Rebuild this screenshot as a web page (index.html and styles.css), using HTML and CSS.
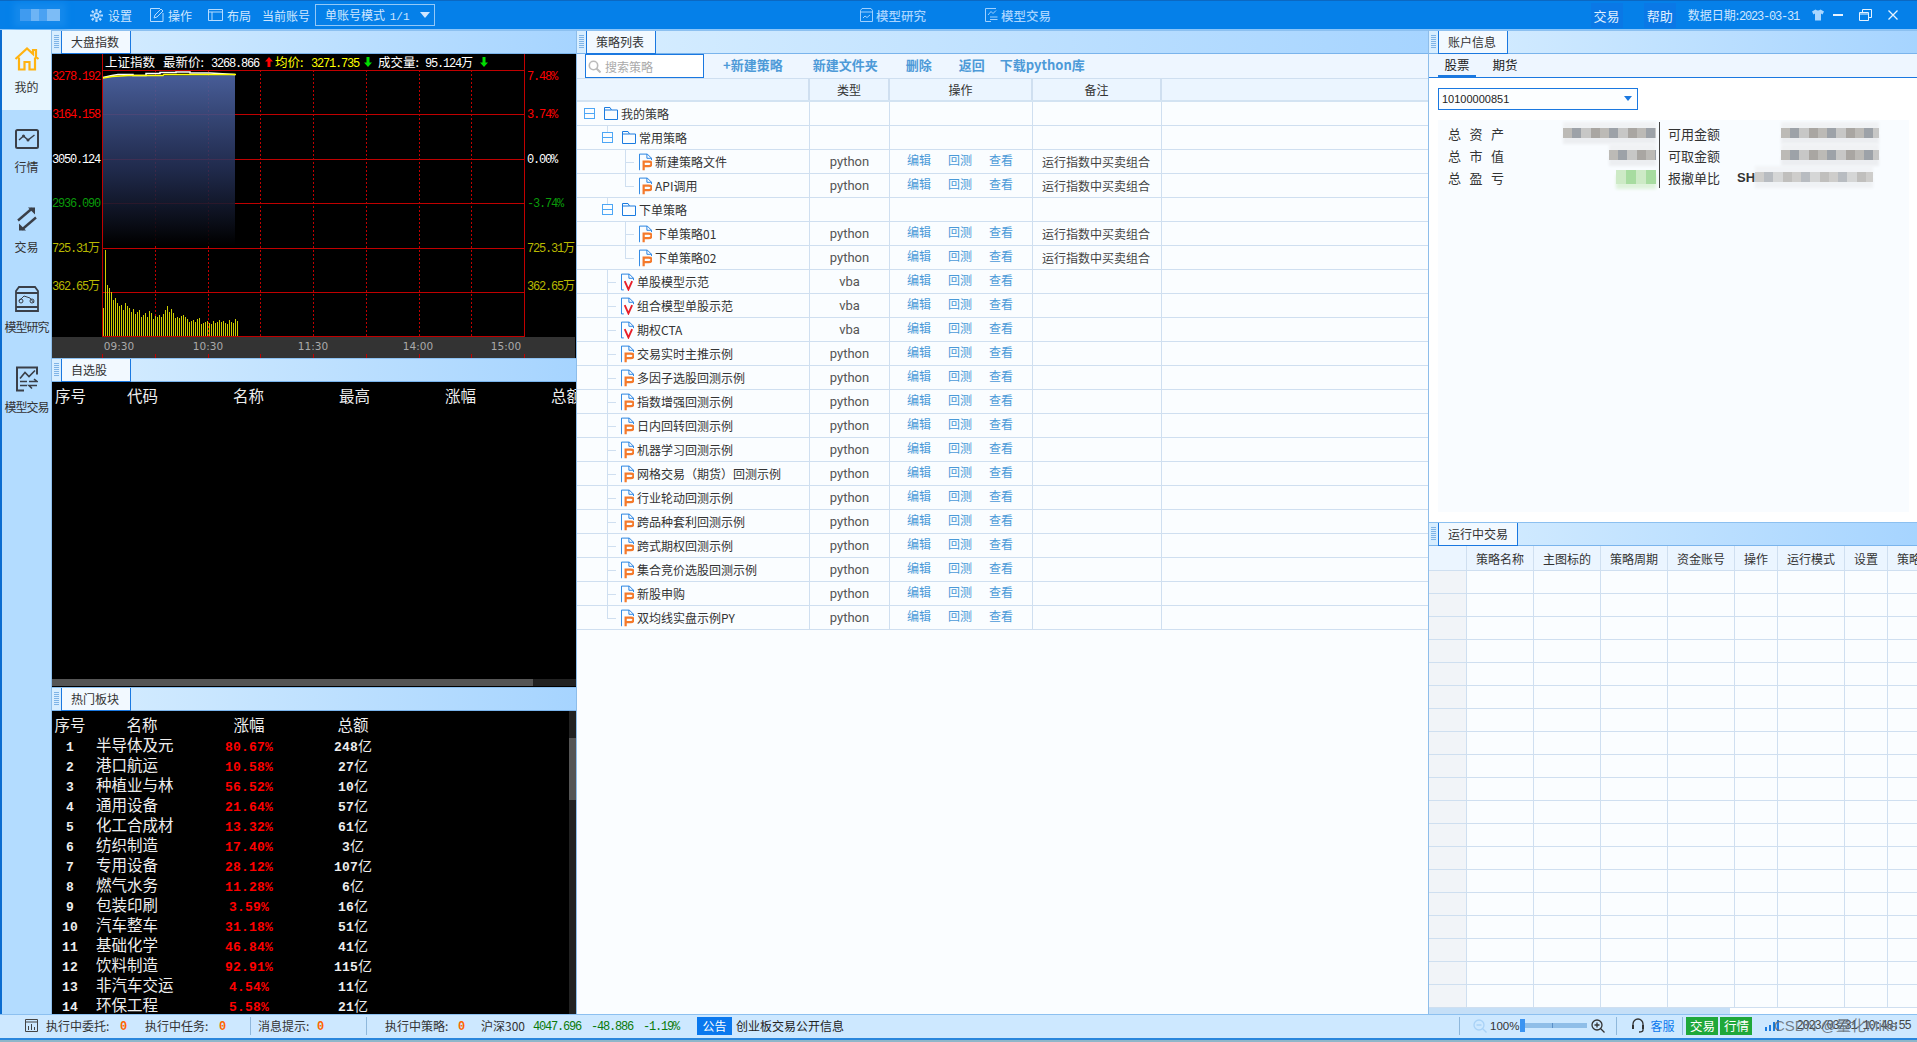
FILE: index.html
```html
<!DOCTYPE html>
<html lang="zh-CN">
<head>
  <meta charset="UTF-8" />
  <title>量化交易终端</title>
  <link rel="stylesheet" href="styles.css">
</head>
<body>
  <svg class="sprite" width="0" height="0">
    <symbol id="ic-p" viewBox="0 0 14 18">
      <path d="M1 17.5H.5V.5H9L13.5 5V7" fill="none" stroke="#1a7be0"/>
      <path d="M8.5 .5V5H13.5" fill="none" stroke="#1a7be0"/>
      <path d="M5 18V8.5H10.5Q13.5 8.5 13.5 11T10.5 13.5H5" fill="none" stroke="#f4792b" stroke-width="2.4"/>
    </symbol>
    <symbol id="ic-v" viewBox="0 0 14 18">
      <path d="M3 17.5H.5V.5H9L13.5 5V7" fill="none" stroke="#1a7be0"/>
      <path d="M8.5 .5V5H13.5" fill="none" stroke="#1a7be0"/>
      <path d="M4 8L8 17L12 8" fill="none" stroke="#e8202a" stroke-width="2"/>
    </symbol>
    <symbol id="ic-folder" viewBox="0 0 14 13">
      <path d="M.5 12.5V.5H6L7.5 3H13.5V12.5ZM.5 3H7.5" fill="none" stroke="#1a7be0"/>
    </symbol>
    <symbol id="ic-box" viewBox="0 0 11 11">
      <rect x=".5" y=".5" width="10" height="10" fill="#fafdff" stroke="#4da6f5"/>
      <path d="M1 5.5H10" stroke="#4da6f5"/>
    </symbol>
    <symbol id="ic-arrow-up" viewBox="0 0 8 10"><path d="M4 0L8 4.5H5.5V10H2.5V4.5H0Z"/></symbol>
    <symbol id="ic-arrow-down" viewBox="0 0 8 10"><path d="M4 10L8 5.5H5.5V0H2.5V5.5H0Z"/></symbol>
  </svg>

  <div class="topbar">
    <div class="logo-blur"></div>
    <div class="menu-item menu-first">
      <svg width="13" height="13" viewBox="0 0 14 14"><path d="M7 4.5A2.5 2.5 0 1 0 7 9.5A2.5 2.5 0 1 0 7 4.5Z" fill="none" stroke="#b6dcff" stroke-width="2"/><path d="M7 0V3M7 11V14M0 7H3M11 7H14M2 2L4 4M10 10L12 12M12 2L10 4M4 10L2 12" stroke="#b6dcff" stroke-width="2.4"/></svg>
      设置
    </div>
    <div class="menu-item menu-edit">
      <svg width="14" height="14" viewBox="0 0 14 14"><path d="M10 .5H.5V13.5H13V5M4 10L5 7L11 1L13 3L7 9Z" fill="none" stroke="#b6dcff"/></svg>
      操作
    </div>
    <div class="menu-item menu-layout">
      <svg width="15" height="12" viewBox="0 0 15 12"><path d="M.5 .5H14.5V11.5H.5ZM.5 3H14.5M4 3V11.5" fill="none" stroke="#b6dcff"/></svg>
      布局
    </div>
    <div class="menu-label">当前账号</div>
    <div class="mode-select">单账号模式 <span class="mode-num">1/1</span><i class="mode-caret"></i></div>
    <div class="top-center">
      <div class="center-btn">
        <svg width="13" height="14" viewBox="0 0 13 14"><path d="M.5 13.5V2.5L2 .5H11L12.5 2.5V13.5ZM.5 4H12.5M3 10L5 8L7 9.5L10 7" fill="none" stroke="#9fd0ff"/></svg>
        模型研究
      </div>
      <div class="center-btn">
        <svg width="13" height="14" viewBox="0 0 13 14"><path d="M11 .5H.5V13.5H6M3 7L6 3.5L8 5.5L11 2.5M5 9H12.5M5 11.5H12.5" fill="none" stroke="#9fd0ff"/></svg>
        模型交易
      </div>
    </div>
    <div class="top-right">
      <div class="top-link">交易</div>
      <div class="top-link">帮助</div>
      <div class="data-date">数据日期:<span class="mono-text">2023-03-31</span></div>
      <svg class="win-shirt" width="12" height="12" viewBox="0 0 12 12"><path d="M3.5 .5L0 2.5L1.5 5.5L3 4.5V11.5H9V4.5L10.5 5.5L12 2.5L8.5 .5Q6 2.5 3.5 .5Z" fill="#a9d6ff"/></svg>
      <svg class="win-btn" width="10" height="10" viewBox="0 0 10 10"><path d="M0 5H10" stroke="#e6f3ff" stroke-width="2"/></svg>
      <svg class="win-btn" width="13" height="12" viewBox="0 0 13 12"><path d="M.5 3.5H9.5V11.5H.5ZM3.5 3V.5H12.5V8.5H10M.5 5H9.5" fill="none" stroke="#e6f3ff"/></svg>
      <svg class="win-btn" width="10" height="10" viewBox="0 0 10 10"><path d="M.5 .5L9.5 9.5M9.5 .5L.5 9.5" stroke="#e6f3ff" stroke-width="1.3"/></svg>
    </div>
  </div>

  <div class="main">
    <div class="rail">
      <div class="rail-item active">
        <svg width="26" height="26" viewBox="0 0 26 26"><path d="M1.5 13L13 2.5L19 8V4H22V11L24.5 13M5 11.5V23.5H10.5V16H15.5V23.5H21V11.5" fill="none" stroke="#ffb311" stroke-width="2.2"/></svg>
        <span>我的</span>
      </div>
      <div class="rail-item">
        <svg width="24" height="20" viewBox="0 0 24 20"><rect x="1" y="1" width="22" height="18" rx="1.5" fill="none" stroke="#3a3f48" stroke-width="2"/><path d="M4 11L8.5 7L13 11L19.5 6" fill="none" stroke="#3a3f48" stroke-width="1.4"/><circle cx="8.5" cy="7" r="1.5" fill="#3a3f48"/><circle cx="13" cy="11" r="1.5" fill="#3a3f48"/></svg>
        <span>行情</span>
      </div>
      <div class="rail-item">
        <svg width="24" height="25" viewBox="0 0 24 25"><path d="M3 14L17 2" stroke="#3a3f48" stroke-width="2.4"/><path d="M13 1H20V8Z" fill="#3a3f48"/><path d="M21 11L7 23" stroke="#3a3f48" stroke-width="2.4"/><path d="M11 24H4V17Z" fill="#3a3f48"/></svg>
        <span>交易</span>
      </div>
      <div class="rail-item">
        <svg width="24" height="26" viewBox="0 0 24 26"><path d="M1 25V5L4 1H20L23 5V25ZM1 7H23M1 21H23" fill="none" stroke="#3a3f48" stroke-width="1.8"/><path d="M4 15L9 10L15 12L19 17" fill="none" stroke="#3a3f48"/><circle cx="6" cy="15" r="2" fill="none" stroke="#3a3f48"/><circle cx="17" cy="15" r="2" fill="none" stroke="#3a3f48"/></svg>
        <span class="rail-long">模型研究</span>
      </div>
      <div class="rail-item">
        <svg width="22" height="25" viewBox="0 0 22 25"><path d="M21 8V1H1V24H8" fill="none" stroke="#3a3f48" stroke-width="2"/><path d="M4 12L9 6L13 10L19 4" fill="none" stroke="#3a3f48" stroke-width="1.6"/><path d="M4 15H11M4 19H11M13 15H21L18 12.5M21 19H13L16 22" fill="none" stroke="#3a3f48" stroke-width="1.6"/></svg>
        <span class="rail-long">模型交易</span>
      </div>
    </div>

    <div class="col col-left">
      <div class="panel-head"><i class="grip"></i><div class="panel-tab">大盘指数</div></div>
      <div class="chart-box">
        <svg class="chart" viewBox="52 54 523 304" width="523" height="304">
          <defs>
            <linearGradient id="areaFill" x1="0" y1="0" x2="0" y2="1">
              <stop offset="0" stop-color="#4d64a3" stop-opacity=".93"/>
              <stop offset=".55" stop-color="#26325a" stop-opacity=".85"/>
              <stop offset="1" stop-color="#000" stop-opacity=".9"/>
            </linearGradient>
          </defs>
          <rect x="52" y="54" width="523" height="304" fill="#000"/>
          <path d="M102 70.5H525M102 114.5H525M102 159.5H525M102 203.5H525M102 248.5H525M102 292.5H525M102 336.5H525" stroke="#c00000"/>
          <path d="M102.5 54V337M524.5 54V337" stroke="#c00000"/>
          <path d="M155.5 70V337M208.5 70V337M260.5 70V337M313.5 70V337M366.5 70V337M419.5 70V337M471.5 70V337" stroke="#c00000" stroke-dasharray="2 2"/>
          <path d="M103 78L112 76L128 75.5L160 75.5L235 75V245H103Z" fill="url(#areaFill)"/>
          <path d="M103 77.5L112 75.5L118 74.5H133V75.5H146V73.5H160V72.5H176V72H190V73H210V73L235 74.5" fill="none" stroke="#fff" stroke-width="1.5"/>
          <path d="M103 78L112 76.5L128 75.5L163 75.5L164 74.5L236 74.5" fill="none" stroke="#ffff00" stroke-width="1.3"/>
          <path id="volBars" d="" stroke="#cccc00" stroke-width="1" fill="none" shape-rendering="crispEdges"/>

          <g class="chart-title">
            <text x="105" y="67" class="cjk white">上证指数</text>
            <text x="163" y="67" class="cjk white">最新价:</text>
            <text x="211" y="67" class="num white">3268.866</text>
            <use href="#ic-arrow-up" x="265" y="57" width="8" height="10" fill="#f00"/>
            <text x="275" y="67" class="cjk yellow">均价:</text>
            <text x="311" y="67" class="num yellow">3271.735</text>
            <use href="#ic-arrow-down" x="364" y="57" width="8" height="10" fill="#0d0"/>
            <text x="378" y="67" class="cjk white">成交量:</text>
            <text x="425" y="67" class="num white">95.124<tspan class="cjk-small">万</tspan></text>
            <use href="#ic-arrow-down" x="480" y="57" width="8" height="10" fill="#0d0"/>
          </g>

          <g class="chart-axis">
            <text x="52" y="80" class="num red">3278.192</text>
            <text x="52" y="118" class="num red">3164.158</text>
            <text x="52" y="163" class="num white">3050.124</text>
            <text x="52" y="207" class="num green">2936.090</text>
            <text x="52" y="252" class="num olive">725.31<tspan class="cjk-small">万</tspan></text>
            <text x="52" y="290" class="num olive">362.65<tspan class="cjk-small">万</tspan></text>
            <text x="527" y="80" class="num red">7.48%</text>
            <text x="527" y="118" class="num red">3.74%</text>
            <text x="527" y="163" class="num white">0.00%</text>
            <text x="527" y="207" class="num green">-3.74%</text>
            <text x="527" y="252" class="num olive">725.31<tspan class="cjk-small">万</tspan></text>
            <text x="527" y="290" class="num olive">362.65<tspan class="cjk-small">万</tspan></text>
          </g>

          <rect x="52" y="337" width="523" height="21" fill="#333"/>
          <path d="M102.5 354V358M155.5 354V358M208.5 354V358M260.5 354V358M313.5 354V358M366.5 354V358M419.5 354V358M471.5 354V358M524.5 354V358" stroke="#c00000"/>
          <g class="chart-time">
            <text x="119" y="350">09:30</text>
            <text x="208" y="350">10:30</text>
            <text x="313" y="350">11:30</text>
            <text x="418" y="350">14:00</text>
            <text x="506" y="350">15:00</text>
          </g>
        </svg>
      </div>

      <div class="panel-head"><i class="grip"></i><div class="panel-tab">自选股</div></div>
      <div class="watch">
        <div class="watch-head">
          <span>序号</span><span>代码</span><span>名称</span><span>最高</span><span>涨幅</span><span>总额</span>
        </div>
        <div class="h-scroll"><div class="h-thumb"></div></div>
      </div>

      <div class="panel-head"><i class="grip"></i><div class="panel-tab">热门板块</div></div>
      <div class="hot">
        <div class="hot-list">
          <div class="hot-row hot-head"><span class="hot-idx">序号</span><span class="hot-name">名称</span><span class="hot-pct">涨幅</span><span class="hot-total">总额</span></div>
          <div id="hotRows"></div>
        </div>
        <div class="v-scroll"><div class="v-thumb"></div></div>
      </div>
    </div>

    <div class="col col-mid">
      <div class="panel-head"><i class="grip"></i><div class="panel-tab">策略列表</div></div>
      <div class="toolbar">
        <div class="search-box">
          <svg width="13" height="13" viewBox="0 0 13 13"><circle cx="5.5" cy="5.5" r="4.2" fill="none" stroke="#bbb" stroke-width="1.6"/><path d="M8.5 8.5L12.5 12.5" stroke="#bbb" stroke-width="2"/></svg>
          <span>搜索策略</span>
        </div>
        <a class="tool-link link-new">+新建策略</a>
        <a class="tool-link link-folder">新建文件夹</a>
        <a class="tool-link link-del">删除</a>
        <a class="tool-link link-back">返回</a>
        <a class="tool-link link-down">下载python库</a>
      </div>
      <div class="tree-table">
        <div class="tree-row tree-head">
          <div class="cell c-tree"></div><div class="cell c-type">类型</div><div class="cell c-op op-title">操作</div><div class="cell c-note note-title">备注</div><div class="cell c-rest"></div>
        </div>
        <div id="treeRows"></div>
      </div>
    </div>

    <div class="col col-right">
      <div class="panel-head"><i class="grip"></i><div class="panel-tab">账户信息</div></div>
      <div class="account">
        <div class="sub-tabs"><span class="sub-tab on">股票</span><span class="sub-tab">期货</span></div>
        <div class="acct-select"><span>10100000851</span><i class="acct-caret"></i></div>
        <div class="acct-info">
          <div class="acct-left">
            <div class="acct-row"><span class="acct-name">总资产</span><i class="mosaic m-asset"></i></div>
            <div class="acct-row"><span class="acct-name">总市值</span><i class="mosaic m-value"></i></div>
            <div class="acct-row"><span class="acct-name">总盈亏</span><i class="mosaic m-green"></i></div>
          </div>
          <div class="acct-right">
            <div class="acct-row"><span>可用金额</span><i class="mosaic m-cash"></i></div>
            <div class="acct-row"><span>可取金额</span><i class="mosaic m-cash"></i></div>
            <div class="acct-row"><span>报撤单比</span><b class="acct-sh">SH</b><i class="mosaic m-ratio"></i></div>
          </div>
        </div>
      </div>
      <div class="panel-head"><i class="grip"></i><div class="panel-tab tab-wide">运行中交易</div></div>
      <div class="run-table">
        <div class="run-row run-head">
          <span class="run-gutter"></span><span>策略名称</span><span>主图标的</span><span>策略周期</span><span>资金账号</span><span class="run-narrow">操作</span><span>运行模式</span><span class="run-narrow">设置</span><span>策略状态</span>
        </div>
        <div id="runRows"></div>
        <div class="run-scroll"><div class="run-thumb"></div></div>
      </div>
    </div>
  </div>

  <div class="statusbar">
    <svg class="st-icon" width="13" height="13" viewBox="0 0 13 13"><path d="M.5 .5H12.5V12.5H.5ZM.5 3H12.5M3.5 11V7M6.5 11V5M9.5 11V8" fill="none" stroke="#444"/></svg>
    <span class="st-label w-74">执行中委托:</span><span class="st-zero w-25">0</span>
    <span class="st-label w-74">执行中任务:</span><span class="st-zero w-31">0</span>
    <i class="st-div st-d1"></i>
    <span class="st-label w-59">消息提示:</span><span class="st-zero w-49">0</span>
    <i class="st-div st-d2"></i>
    <span class="st-label w-73">执行中策略:</span><span class="st-zero w-23">0</span>
    <span class="st-label w-52">沪深300</span>
    <span class="st-num w-58">4047.696</span><span class="st-num w-52">-48.886</span><span class="st-num w-54">-1.19%</span>
    <span class="st-notice">公告</span>
    <span class="st-news">创业板交易公开信息</span>
    <div class="st-right">
      <i class="st-div"></i>
      <svg class="st-zoom-out" width="14" height="14" viewBox="0 0 14 14"><circle cx="6" cy="6" r="5" fill="none" stroke="#a9d2f7" stroke-width="1.3"/><path d="M3.5 6H8.5M9.5 9.5L13.5 13.5" stroke="#a9d2f7" stroke-width="1.3"/></svg>
      <span class="st-pct">100%</span>
      <div class="st-slider"><i class="st-knob"></i><i class="st-mid"></i></div>
      <svg class="st-zoom-in" width="14" height="14" viewBox="0 0 14 14"><circle cx="6" cy="6" r="5" fill="none" stroke="#333" stroke-width="1.3"/><path d="M3.5 6H8.5M6 3.5V8.5M9.5 9.5L13.5 13.5" stroke="#333" stroke-width="1.3"/></svg>
      <i class="st-div st-d3"></i>
      <svg class="st-head" width="14" height="15" viewBox="0 0 14 15"><path d="M2 8V6A5 5 0 0 1 12 6V8M12 10V12Q12 14 8 14" fill="none" stroke="#333" stroke-width="1.3"/><rect x="1" y="7" width="2" height="4" fill="#333"/><rect x="11" y="7" width="2" height="4" fill="#333"/></svg>
      <span class="st-service">客服</span>
      <i class="st-div st-d4"></i>
      <span class="st-green">交易</span><span class="st-green">行情</span>
      <svg class="st-signal" width="14" height="11" viewBox="0 0 14 11"><path d="M0 7H2V11H0ZM4 5H6V11H4ZM8 2H10V11H8ZM12 0H14V11H12Z" fill="#1a7be0"/></svg>
      <span class="st-clock">2023/03/31 10:48:55</span>
      <span class="watermark">CSDN @量化Mike</span>
    </div>
  </div>

  <script src="script.js"></script>
</body>
</html>
```
FILE: styles.css
```css
* {
  margin: 0;
  padding: 0;
  box-sizing: border-box;
}

body {
  width: 1917px;
  height: 1042px;
  overflow: hidden;
  background: #8fb6c9;
  font-family: "Noto Sans CJK SC", "Noto Sans", sans-serif;
  font-size: 12px;
  color: #333;
}

.sprite {
  display: block;
  height: 0;
}

/* top bar */
.topbar {
  height: 30px;
  display: flex;
  align-items: center;
  background: #0580e9;
  border-top: 1px solid #0b68c2;
  border-bottom: 1px solid #8cc6fa;
  color: #cfe7ff;
  font-size: 12px;
}

.logo-blur {
  width: 40px;
  height: 12px;
  margin-left: 20px;
  background: linear-gradient(90deg, #3f9bf0 0 28%, #6db4f5 28% 48%, #4ba2f2 48% 68%, #7cbcf6 68%);
  box-shadow: 0 0 6px 6px #1489ec;
}

.menu-item {
  display: flex;
  align-items: center;
  gap: 4px;
}

.menu-first {
  margin-left: 30px;
  gap: 5px;
}

.menu-edit {
  margin-left: 18px;
}

.menu-layout {
  margin-left: 16px;
}

.menu-label {
  margin-left: 11px;
}

.mode-select {
  position: relative;
  width: 120px;
  height: 22px;
  margin-left: 5px;
  padding-left: 9px;
  line-height: 20px;
  border: 1px solid #93c8f7;
  white-space: nowrap;
}

.mode-num {
  font-family: "Liberation Mono", monospace;
  font-size: 11px;
  margin-left: 2px;
}

.mode-caret {
  position: absolute;
  right: 4px;
  top: 7px;
  border: 5px solid transparent;
  border-top: 6px solid #cfe7ff;
}

.top-center {
  display: flex;
  gap: 59px;
  margin-left: 425px;
}

.center-btn {
  display: flex;
  align-items: center;
  gap: 3px;
  color: #a8d4ff;
  font-size: 12.5px;
  font-weight: 500;
}

.top-right {
  display: flex;
  align-items: center;
  margin-left: auto;
  padding-right: 19px;
  font-size: 13px;
}

.top-link {
  padding: 3px 3px;
  margin-right: 21px;
  background: #0a78e6;
  color: #e0f0ff;
}

.top-link + .top-link {
  margin-right: 12px;
}

.data-date {
  font-size: 12px;
  white-space: nowrap;
  margin-right: 13px;
}

.mono-text {
  font-family: "Liberation Mono", monospace;
  letter-spacing: -1.2px;
  font-size: 12px;
}

.win-shirt {
  margin-right: 9px;
}

.win-btn {
  margin-right: 16px;
}

.win-btn:last-child {
  margin-right: 0;
}

/* body columns */
.main {
  display: flex;
  height: 984px;
}

.rail {
  width: 52px;
  flex: none;
  background: #b3dcff;
  border-left: 2px solid #0a6cd0;
  border-right: 1px solid #8dbdea;
}

.rail-item {
  height: 80px;
  display: flex;
  flex-direction: column;
  align-items: center;
  padding-top: 16px;
  gap: 7px;
  font-size: 12px;
  line-height: 16px;
  color: #333;
  white-space: nowrap;
}

.rail-item svg {
  height: 26px;
}

.rail-long {
  letter-spacing: -1px;
}

.rail-item.active {
  background: #e6f5ff;
}

.col {
  flex: none;
  height: 984px;
  overflow: hidden;
}

.col-left {
  width: 524px;
}

.col-mid {
  width: 852px;
  background: #fafdff;
  border-left: 1px solid #8dbdea;
}

.col-right {
  width: 489px;
  background: #fff;
  border-left: 1px solid #8dbdea;
}

.panel-head {
  height: 24px;
  display: flex;
  align-items: stretch;
  background: linear-gradient(90deg, #d8eeff, #a6d4ff);
  border-top: 1px solid #8cc0f0;
  border-bottom: 1px solid #7ab4ec;
}

.grip {
  width: 5px;
  height: 14px;
  margin: 4px 2px 0 2px;
  background: repeating-linear-gradient(180deg, #7fb4e6 0 1px, #d6ecff 1px 2px);
}

.panel-tab {
  width: 70px;
  margin-bottom: -1px;
  padding-left: 9px;
  line-height: 21px;
  background: #f2f9ff;
  border: 1px solid #1a78e0;
  border-top: none;
  font-size: 12px;
  color: #333;
}

.panel-tab.tab-wide {
  width: 80px;
}

/* index chart */
.chart-box {
  height: 304px;
  background: #000;
}

.chart {
  display: block;
  overflow: visible;
}

.chart text {
  font-size: 12px;
}

.chart .cjk {
  font-family: "Noto Sans CJK SC", sans-serif;
  font-size: 12.5px;
}

.chart .num {
  font-family: "Liberation Mono", monospace;
  letter-spacing: -1.2px;
}

.chart .cjk-small {
  font-family: "Noto Sans CJK SC", sans-serif;
  letter-spacing: 0;
  font-size: 12px;
}

.chart .white { fill: #fff; }
.chart .yellow { fill: #ff0; }
.chart .red { fill: #f00; }
.chart .green { fill: #0a9a0a; }
.chart .olive { fill: #b8b800; }

.chart-time text {
  font-family: "DejaVu Sans", sans-serif;
  font-size: 10.5px;
  fill: #aaa;
  text-anchor: middle;
}

/* watch list */
.watch {
  height: 305px;
  background: #000;
  display: flex;
  flex-direction: column;
  justify-content: space-between;
  overflow: hidden;
}

.watch-head {
  display: flex;
  padding: 2px 0 0 3px;
  color: #eee;
  font-size: 15.5px;
  line-height: 22px;
  white-space: nowrap;
}

.watch-head span {
  width: 106px;
  flex: none;
}

.watch-head span:first-child {
  width: 72px;
}

.h-scroll {
  height: 7px;
  margin-bottom: 1px;
  background: #222;
}

.h-thumb {
  width: 481px;
  height: 7px;
  background: #555;
}

/* hot sectors */
.hot {
  height: 303px;
  display: flex;
  background: #000;
  overflow: hidden;
}

.hot-list {
  flex: 1;
}

.hot-row {
  display: flex;
  align-items: baseline;
  height: 20px;
  line-height: 20px;
  color: #eee;
  font-size: 15.5px;
  white-space: nowrap;
}

.hot-head {
  height: 21px;
  margin-top: 2px;
  line-height: 22px;
}

.hot-idx {
  width: 36px;
  text-align: center;
}

.hot-name {
  width: 108px;
  padding-left: 8px;
}

.hot-head .hot-name {
  padding-left: 0;
  text-align: center;
}

.hot-pct {
  width: 106px;
  text-align: center;
}

.hot-total {
  width: 102px;
  text-align: center;
}

.hot-list .hot-row:not(.hot-head) .hot-idx,
.hot-list .hot-row:not(.hot-head) .hot-total {
  font-family: "Liberation Mono", monospace;
  font-size: 13px;
  font-weight: bold;
  letter-spacing: .2px;
}

.hot-list .hot-row:not(.hot-head) .hot-pct {
  font-family: "Liberation Mono", monospace;
  font-size: 13px;
  font-weight: bold;
  letter-spacing: .2px;
  color: #f00;
}

.hot-total b {
  font-family: "Noto Sans CJK SC", sans-serif;
  font-size: 14px;
  font-weight: 400;
  letter-spacing: 0;
}

.v-scroll {
  width: 7px;
  background: #222;
}

.v-thumb {
  height: 62px;
  margin-top: 27px;
  background: #555;
}

/* strategy list */
.toolbar {
  height: 25px;
  display: flex;
  align-items: flex-start;
  background: #eef6ff;
  border-bottom: 1px solid #cfdff0;
}

.search-box {
  width: 119px;
  height: 24px;
  margin-left: 8px;
  padding-left: 2px;
  display: flex;
  align-items: center;
  gap: 4px;
  background: #fff;
  border: 1px solid #1a78e0;
  color: #aaa;
  font-size: 12px;
}

.tool-link {
  margin-top: 3px;
  font-size: 13px;
  font-weight: 700;
  color: #4d9ad8;
  line-height: 16px;
  white-space: nowrap;
}

.link-new { margin-left: 19px; }
.link-folder { margin-left: 30px; }
.link-del { margin-left: 28px; }
.link-back { margin-left: 27px; }
.link-down { margin-left: 15px; }

.tree-table {
  font-size: 12px;
}

.tree-row {
  display: flex;
  height: 24px;
  border-bottom: 1px solid #cfdff0;
  line-height: 23px;
}

.tree-head {
  height: 23px;
  background: #ebf5ff;
  border-bottom: 2px solid #d3e3f2;
}

.tree-head .cell {
  border-right-width: 2px;
  line-height: 21px;
  color: #333;
}

.cell {
  flex: none;
  border-right: 1px solid #cfdff0;
  white-space: nowrap;
}

.c-tree {
  width: 233px;
  display: flex;
  align-items: center;
  padding-left: 3px;
}

.c-type {
  width: 80px;
  text-align: center;
  font-family: "Roboto", sans-serif;
  font-size: 13px;
  color: #555;
}

.tree-head .c-type,
.op-title {
  font-family: "Noto Sans CJK SC", sans-serif;
  font-size: 12px;
  color: #333;
}

.c-op {
  width: 143px;
  display: flex;
  gap: 17px;
  padding-left: 17px;
  color: #4a9ad8;
  line-height: 20px;
}

.op-title {
  display: block;
  padding-left: 0;
  text-align: center;
}

.c-note {
  width: 129px;
  padding-left: 9px;
  color: #444;
}

.note-title {
  padding-left: 0;
  text-align: center;
}

.c-rest {
  border-right: none;
  flex: 1;
}

.guide {
  width: 18px;
  height: 23px;
  flex: none;
  display: flex;
  align-items: center;
  justify-content: center;
}

.guide-t {
  background:
    linear-gradient(#cfdff0, #cfdff0) 9px 0 / 1px 100% no-repeat,
    linear-gradient(#cfdff0, #cfdff0) 9px 12px / 9px 1px no-repeat;
}

.guide-l {
  background:
    linear-gradient(#cfdff0, #cfdff0) 9px 0 / 1px 13px no-repeat,
    linear-gradient(#cfdff0, #cfdff0) 9px 12px / 9px 1px no-repeat;
}

.guide-b {
  background: linear-gradient(#cfdff0, #cfdff0) 9px 0 / 1px 7px no-repeat;
}

.icon-folder {
  margin-left: 6px;
  margin-right: 3px;
  flex: none;
}

.icon-file {
  margin-left: 5px;
  margin-right: 3px;
  flex: none;
}

/* account panel */
.account {
  height: 468px;
}

.sub-tabs {
  height: 24px;
  display: flex;
  gap: 10px;
  padding-left: 9px;
  background: #eef6ff;
  border-bottom: 1px solid #1a78e0;
}

.sub-tab {
  width: 38px;
  height: 23px;
  line-height: 22px;
  text-align: center;
  font-size: 12.5px;
  color: #222;
}

.sub-tab.on {
  border-bottom: 2px solid #1a78e0;
}

.acct-select {
  width: 200px;
  height: 22px;
  margin: 10px 0 0 9px;
  padding-left: 3px;
  display: flex;
  align-items: center;
  justify-content: space-between;
  border: 1px solid #1a78e0;
  background: #fcfeff;
  font-family: "Liberation Sans", sans-serif;
  font-size: 11px;
  color: #222;
}

.acct-caret {
  margin-right: 5px;
  margin-top: 3px;
  border: 4px solid transparent;
  border-top: 5px solid #1a78e0;
}

.acct-info {
  height: 392px;
  margin: 10px 8px 0 9px;
  padding: 2px 0 0 10px;
  display: flex;
  background: #f9fcff;
}

.acct-left {
  width: 212px;
  height: 66px;
  border-right: 1px solid #444;
}

.acct-right {
  flex: 1;
  height: 66px;
  padding-left: 8px;
}

.acct-row {
  height: 22px;
  display: flex;
  align-items: center;
  font-size: 13px;
  color: #333;
  white-space: nowrap;
}

.acct-name {
  letter-spacing: 8.5px;
}

.acct-sh {
  margin-left: 17px;
  font-family: "Liberation Sans", sans-serif;
  color: #333;
}

.mosaic {
  display: block;
  height: 10px;
  background: repeating-linear-gradient(90deg, #bcbab6 0 9px, #9da2a8 9px 18px, #c7c7c6 18px 28px, #a9a6a2 28px 37px);
  box-shadow: 0 -6px 3px 0 #f0f2f4, 0 6px 3px 0 #eceef1;
}

.m-asset {
  width: 93px;
  margin-left: 50px;
}

.m-value {
  width: 47px;
  margin-left: 96px;
}

.m-green {
  width: 40px;
  height: 14px;
  margin-left: 103px;
  background: repeating-linear-gradient(90deg, #cdeac6 0 10px, #a7dca0 10px 20px);
  box-shadow: 0 5px 3px 0 #def2db;
}

.m-cash {
  width: 98px;
  margin-left: 61px;
}

.m-ratio {
  width: 118px;
  margin-left: 0;
  opacity: .7;
}

/* running trades */
.run-table {
  height: 468px;
  overflow: hidden;
  display: flex;
  flex-direction: column;
}

.run-row {
  display: flex;
  flex: none;
  height: 23px;
  border-bottom: 1px solid #cfdff0;
  background: #fafdff;
}

.run-row > span {
  width: 67px;
  flex: none;
  border-right: 1px solid #cfdff0;
  text-align: center;
  white-space: nowrap;
  line-height: 22px;
}

.run-row > .run-gutter {
  width: 38px;
  background: #f1f4f8;
}

.run-row > .run-narrow {
  width: 43px;
}

.run-head {
  height: 25px;
  background: #ebf5ff;
}

.run-head > span {
  line-height: 25px;
  color: #333;
}

.run-head > .run-gutter {
  background: #ebf5ff;
}

#runRows {
  height: 437px;
  flex: none;
  overflow: hidden;
}

.run-scroll {
  height: 6px;
  flex: none;
}

.run-thumb {
  width: 301px;
  height: 6px;
  background: #c5dff7;
}

/* status bar */
.statusbar {
  height: 26px;
  display: flex;
  align-items: center;
  padding: 0 0 2px 25px;
  background: #cde8ff;
  border-top: 1px solid #8cc0f0;
  border-bottom: 2px solid #2a86dc;
  white-space: nowrap;
}

.st-icon {
  margin-right: 8px;
}

.w-23 { width: 23px; }
.w-25 { width: 25px; }
.w-31 { width: 31px; }
.w-49 { width: 49px; }
.w-52 { width: 52px; }
.w-54 { width: 54px; }
.w-58 { width: 58px; }
.w-59 { width: 59px; }
.w-73 { width: 73px; }
.w-74 { width: 74px; }

.st-label,
.st-zero,
.st-num {
  flex: none;
}

.st-label {
  color: #333;
}

.st-zero {
  margin-top: 2px;
  font-family: "Liberation Mono", monospace;
  font-weight: bold;
  font-size: 12px;
  color: #f60;
}

.st-div {
  width: 1px;
  height: 18px;
  background: #8fb8dc;
  flex: none;
}

.st-d1 { margin-right: 7px; }
.st-d2 { margin-right: 18px; }

.st-num {
  margin-top: 2px;
  font-family: "Liberation Mono", monospace;
  font-size: 12px;
  letter-spacing: -1.2px;
  color: #0a7a0a;
}

.st-notice {
  width: 35px;
  height: 18px;
  flex: none;
  background: #0a78ee;
  color: #fff;
  text-align: center;
  line-height: 18px;
}

.st-news {
  width: 108px;
  flex: none;
  margin-left: 4px;
  color: #222;
}

.st-right {
  position: relative;
  display: flex;
  align-items: center;
  margin-left: 615px;
  flex: 1;
}

.st-zoom-out { margin-left: 13px; }

.st-pct {
  margin-left: 3px;
  font-family: "Liberation Sans", sans-serif;
  font-size: 11.5px;
}

.st-slider {
  position: relative;
  width: 67px;
  height: 5px;
  margin-left: 1px;
  background: #8fbee8;
}

.st-knob {
  position: absolute;
  left: 0;
  top: -4px;
  width: 5px;
  height: 13px;
  background: #3a94f2;
}

.st-mid {
  position: absolute;
  left: 32px;
  top: 0;
  width: 1px;
  height: 5px;
  background: #5a90c8;
}

.st-zoom-in { margin-left: 4px; }
.st-d3 { margin-left: 11px; }
.st-head { margin-left: 14px; }

.st-service {
  margin-left: 5px;
  font-size: 12px;
  color: #0a78ee;
}

.st-d4 { margin: 0 3px 0 8px; }

.st-green {
  width: 32px;
  height: 18px;
  margin-right: 2px;
  background: #1fa83a;
  color: #fff;
  text-align: center;
  line-height: 18px;
  font-size: 12.5px;
}

.st-signal { margin-left: 11px; }

.st-clock {
  margin-left: 17px;
  font-family: "Liberation Mono", monospace;
  font-size: 12px;
  letter-spacing: -1.2px;
  color: #444;
}

.watermark {
  position: absolute;
  left: 315px;
  top: 0;
  font-family: "Liberation Sans", "Noto Sans CJK SC", sans-serif;
  font-size: 15px;
  line-height: 18px;
  color: rgba(95, 105, 115, .85);
}
```
FILE: script.js
```js
const hotData = [
  ['半导体及元', '80.67%', '248'], ['港口航运', '10.58%', '27'], ['种植业与林', '56.52%', '10'],
  ['通用设备', '21.64%', '57'], ['化工合成材', '13.32%', '61'], ['纺织制造', '17.40%', '3'],
  ['专用设备', '28.12%', '107'], ['燃气水务', '11.28%', '6'], ['包装印刷', '3.59%', '16'],
  ['汽车整车', '31.18%', '51'], ['基础化学', '46.84%', '41'], ['饮料制造', '92.91%', '115'],
  ['非汽车交运', '4.54%', '11'], ['环保工程', '5.58%', '21']
];

const NOTE = '运行指数中买卖组合';

// level, name, kind (folder / p / v), type, note, last child
const treeData = [
  [0, '我的策略', 'folder'],
  [1, '常用策略', 'folder'],
  [2, '新建策略文件', 'p', 'python', NOTE],
  [2, 'API调用', 'p', 'python', NOTE, true],
  [1, '下单策略', 'folder'],
  [2, '下单策略01', 'p', 'python', NOTE],
  [2, '下单策略02', 'p', 'python', NOTE, true],
  [1, '单股模型示范', 'v', 'vba'],
  [1, '组合模型单股示范', 'v', 'vba'],
  [1, '期权CTA', 'v', 'vba'],
  [1, '交易实时主推示例', 'p', 'python'],
  [1, '多因子选股回测示例', 'p', 'python'],
  [1, '指数增强回测示例', 'p', 'python'],
  [1, '日内回转回测示例', 'p', 'python'],
  [1, '机器学习回测示例', 'p', 'python'],
  [1, '网格交易（期货）回测示例', 'p', 'python'],
  [1, '行业轮动回测示例', 'p', 'python'],
  [1, '跨品种套利回测示例', 'p', 'python'],
  [1, '跨式期权回测示例', 'p', 'python'],
  [1, '集合竞价选股回测示例', 'p', 'python'],
  [1, '新股申购', 'p', 'python'],
  [1, '双均线实盘示例PY', 'p', 'python', '', true]
];

const volumeTops = [
  308, 250, 285, 288, 292, 300, 298, 303, 306, 305, 310, 303, 306, 308, 312, 309, 314, 312, 310, 317,
  315, 313, 317, 311, 313, 319, 316, 317, 315, 317, 314, 310, 306, 312, 309, 313, 318, 317, 318, 316,
  315, 317, 319, 322, 321, 320, 322, 319, 318, 324, 323, 322, 321, 323, 324, 321, 323, 322, 320, 322,
  321, 323, 324, 320, 322, 323, 319, 321
];

function renderHot() {
  document.getElementById('hotRows').innerHTML = hotData.map((row, i) =>
    `<div class="hot-row"><span class="hot-idx">${i + 1}</span><span class="hot-name">${row[0]}</span>` +
    `<span class="hot-pct">${row[1]}</span><span class="hot-total">${row[2]}<b>亿</b></span></div>`
  ).join('');
}

function renderTree() {
  document.getElementById('treeRows').innerHTML = treeData.map(([level, name, kind, type = '', note = '', last]) => {
    let tree = '<span class="guide"></span>'.repeat(level);
    if (kind === 'folder') {
      tree += `<span class="guide ${level ? 'guide-b' : ''}"><svg width="11" height="11"><use href="#ic-box"/></svg></span>`;
      tree += '<svg class="icon-folder" width="14" height="13"><use href="#ic-folder"/></svg>';
    } else {
      tree += `<span class="guide ${last ? 'guide-l' : 'guide-t'}"></span>`;
      tree += `<svg class="icon-file" width="13" height="18"><use href="#ic-${kind}"/></svg>`;
    }
    const ops = type ? '<span>编辑</span><span>回测</span><span>查看</span>' : '';
    return `<div class="tree-row"><div class="cell c-tree">${tree}<span>${name}</span></div>` +
      `<div class="cell c-type">${type}</div><div class="cell c-op">${ops}</div>` +
      `<div class="cell c-note">${note}</div><div class="cell c-rest"></div></div>`;
  }).join('');
}

function renderRunGrid() {
  const cells = '<span class="run-gutter"></span><span></span><span></span><span></span><span></span>' +
    '<span class="run-narrow"></span><span></span><span class="run-narrow"></span><span></span>';
  document.getElementById('runRows').innerHTML = `<div class="run-row">${cells}</div>`.repeat(19);
}

function renderVolume() {
  const d = volumeTops.map((top, i) => `M${103 + i * 2}.5 336V${top}`).join('');
  document.getElementById('volBars').setAttribute('d', d);
}

renderHot();
renderTree();
renderRunGrid();
renderVolume();
```
